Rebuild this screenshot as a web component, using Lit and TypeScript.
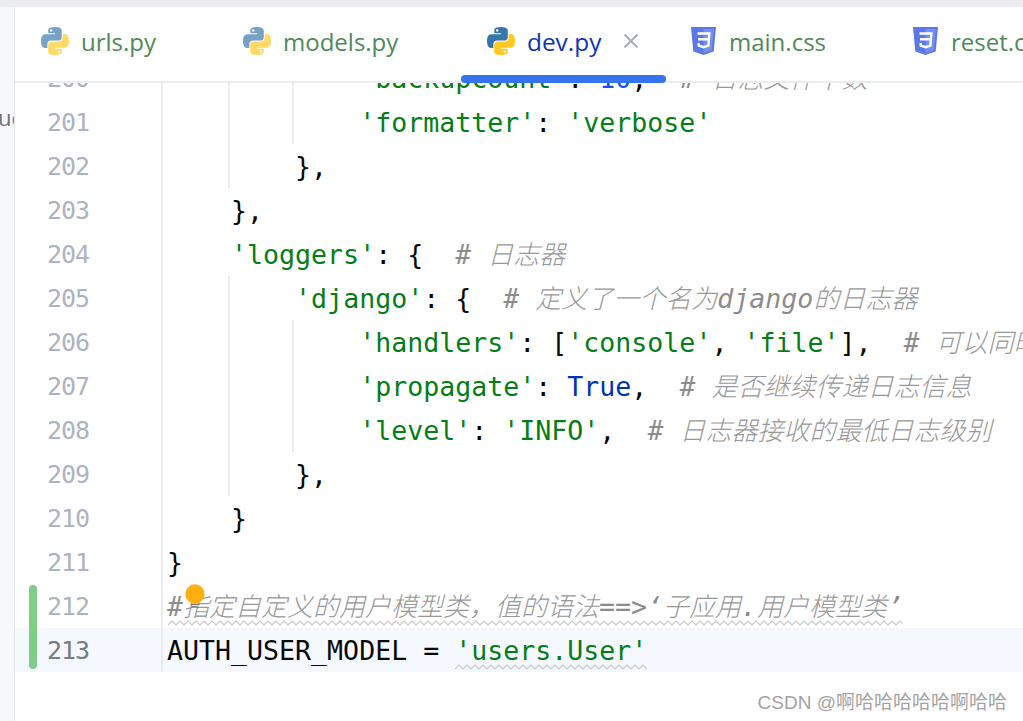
import { LitElement, html, css, svg } from "lit";
import { customElement } from "lit/decorators.js";

type Tok = [string, string];
interface Row { n: number; g?: string; t: Tok[]; cur?: boolean; squig?: [number, number]; bulb?: boolean }

const s = (x: string): Tok => ["str", x];
const p = (x: string): Tok => ["pl", x];
const c = (x: string): Tok => ["com", x];

const rows: Row[] = [
  { n: 200, g: "g1 g2", t: [p("            "), s("'backupcount'"), p(": "), ["num", "10"], p(",  "), c("# 日志文件个数")] },
  { n: 201, g: "g1 g2", t: [p("            "), s("'formatter'"), p(": "), s("'verbose'")] },
  { n: 202, g: "g1", t: [p("        },")] },
  { n: 203, t: [p("    },")] },
  { n: 204, t: [p("    "), s("'loggers'"), p(": {  "), c("# 日志器")] },
  { n: 205, g: "g1", t: [p("        "), s("'django'"), p(": {  "), c("# 定义了一个名为django的日志器")] },
  { n: 206, g: "g1 g2", t: [p("            "), s("'handlers'"), p(": ["), s("'console'"), p(", "), s("'file'"), p("],  "), c("# 可以同时向终端与文件输出")] },
  { n: 207, g: "g1 g2", t: [p("            "), s("'propagate'"), p(": "), ["kw", "True"], p(",  "), c("# 是否继续传递日志信息")] },
  { n: 208, g: "g1 g2", t: [p("            "), s("'level'"), p(": "), s("'INFO'"), p(",  "), c("# 日志器接收的最低日志级别")] },
  { n: 209, g: "g1", t: [p("        },")] },
  { n: 210, t: [p("    }")] },
  { n: 211, t: [p("}")] },
  { n: 212, t: [c("#指定自定义的用户模型类，值的语法==>‘子应用.用户模型类’")], squig: [5, 735], bulb: true },
  { n: 213, cur: true, t: [p("AUTH_USER_MODEL = "), s("'users.User'")], squig: [292, 192] },
];

const tabs = [
  { name: "urls.py", kind: "py", w: "w1" },
  { name: "models.py", kind: "py", w: "w2" },
  { name: "dev.py", kind: "py", w: "w3", active: true },
  { name: "main.css", kind: "css", w: "w4" },
  { name: "reset.css", kind: "css", w: "w5" },
];

const SNAKE = "M54.9 0C26.8 0 28.6 12.2 28.6 12.2l0 12.6h26.8v3.8H17.9S0 26.5 0 54.8s15.6 27.3 15.6 27.3h9.3V69s-.5-15.6 15.4-15.6h26.5s14.9.2 14.9-14.4V14.9S84 0 54.9 0zM40.1 8.5a4.8 4.8 0 1 1 0 9.6 4.8 4.8 0 0 1 0-9.6z";

@customElement("app-root")
export class AppRoot extends LitElement {
  static styles = css`
    :host { display: block; width: 1023px; height: 721px; overflow: hidden; background: #fff; position: relative; }
    .top { height: 7px; background: #ececee; }
    .main { display: flex; height: 714px; }
    .strip { width: 14px; flex: none; background: #f7f8fa; border-right: 1px solid #e6e7ec; overflow: hidden; padding-top: 99px; }
    .strip span { display: block; font: 22px "Open Sans", sans-serif; color: #6c707e; line-height: 22px; white-space: nowrap; margin-left: -2px; }
    .pane { flex: 1; min-width: 0; display: flex; flex-direction: column; position: relative; overflow: hidden; }
    .tabs { height: 74px; flex: none; display: flex; background: #fff; border-bottom: 2px solid #ebecf0; position: relative; z-index: 2; white-space: nowrap; }
    .tab { flex: none; display: flex; align-items: center; padding: 0 0 6px 26px; box-sizing: border-box; position: relative; color: #4f8a58; font: 24px "Open Sans", sans-serif; }
    .w1 { width: 202px; } .w2 { width: 244px; } .w3 { width: 205px; } .w4 { width: 222px; } .w5 { width: 160px; }
    .tab.active { color: #0a36b5; font-size: 24.4px; }
    .icon-py { width: 28px; height: 28px; margin-right: 12px; flex: none; opacity: .68; }
    .active .icon-py { opacity: 1; }
    .icon-css { width: 25px; height: 28px; margin: 0 13px 0 -1px; flex: none; }
    .x { width: 16px; height: 16px; margin-left: 22px; flex: none; margin-bottom: 0; }
    .ind { position: absolute; left: 0; right: 0; bottom: -2px; height: 8px; border-radius: 4px; background: #3574f0; }
    .editor { flex: 1; margin-top: -27px; min-height: 0; position: relative; z-index: 1; }
    .row { display: flex; height: 44px; }
    .row.cur { background: #f5f8fe; }
    .num { width: 148px; flex: none; box-sizing: border-box; padding-left: 32px; border-right: 2px solid #ebecf0; font: 25px/46px "DejaVu Sans Mono", monospace; letter-spacing: -1px; color: #aeb3c2; }
    .cur .num { color: #767a8a; }
    .code { flex: 1; min-width: 0; height: 44px; padding-left: 4px; position: relative; white-space: pre; font: 26.6px/46px "DejaVu Sans Mono", monospace; color: #080808; background-repeat: no-repeat; }
    .code.g1 { background-image: linear-gradient(#ebecf0, #ebecf0); background-size: 2px 100%; background-position: 65px 0; }
    .code.g1.g2 { background-image: linear-gradient(#ebecf0, #ebecf0), linear-gradient(#ebecf0, #ebecf0); background-size: 2px 100%, 2px 100%; background-position: 65px 0, 129px 0; }
    .str { color: #067d17; }
    .kw { color: #0033b3; }
    .numlit { color: #1750eb; }
    .com { color: #8c8c8c; font-style: italic; }
    .cjk { font-family: "Noto Sans CJK SC", sans-serif; font-size: 26px; line-height: 0; font-weight: 300; color: #999; }
    .squig { position: absolute; bottom: 2px; height: 6px; pointer-events: none; }
    .bulb { position: absolute; left: 22px; top: 0; width: 20px; height: 24px; }
    .change { position: absolute; left: 14px; top: 578px; width: 8px; height: 84px; border-radius: 4px; background: #82cc8a; z-index: 3; }
    .mark { position: absolute; right: 16px; bottom: 7px; font: 19px/22px "Liberation Sans", "Noto Sans CJK SC", sans-serif; color: #a3a3a3; white-space: nowrap; z-index: 4; }
  `;

  pyIcon() {
    return html`<svg class="icon-py" viewBox="0 0 110 110">
      <path fill="#3776ab" fill-rule="evenodd" d=${SNAKE}></path>
      <path fill="#ffc91f" fill-rule="evenodd" d=${SNAKE} transform="rotate(180 55 55)"></path>
    </svg>`;
  }

  cssIcon() {
    return html`<svg class="icon-css" viewBox="0 0 25 28">
      <path fill="#5b78e6" d="M0 0H25L22.7 24.6 12.5 28 2.3 24.6Z"></path>
      <path fill="#7690ee" d="M12.5 2V26L20.8 23.3 22.8 2Z"></path>
      <path fill="none" stroke="#fff" stroke-width="2.4" d="M6.5 6.5H18.3L17.4 18.6 12.5 20.2 7.8 18.6 7.5 16M7 12.3H17.8"></path>
    </svg>`;
  }

  comment(text: string) {
    const parts = text.match(/[\u4e00-\u9fff\uff0c]+|[^\u4e00-\u9fff\uff0c]+/g) ?? [];
    return parts.map((t) => (/^[\u4e00-\u9fff\uff0c]/.test(t) ? html`<span class="cjk">${t}</span>` : t));
  }

  squiggle(left: number, width: number) {
    const pts: string[] = [];
    for (let x = 0, i = 0; x <= width + 4; x += 4, i++) pts.push(`${x},${i % 2 ? 1 : 5}`);
    return html`<svg class="squig" style="left:${left}px;width:${width}px" viewBox="0 0 ${width} 6">
      ${svg`<polyline points=${pts.join(" ")} fill="none" stroke="#c9c9c9" stroke-width="1.2"></polyline>`}
    </svg>`;
  }

  render() {
    return html`
      <div class="top"></div>
      <div class="main">
        <div class="strip"><span>uc</span></div>
        <div class="pane">
          <div class="tabs">
            ${tabs.map(
              (t) => html`<div class="tab ${t.w} ${t.active ? "active" : ""}">
                ${t.kind === "py" ? this.pyIcon() : this.cssIcon()}
                <span>${t.name}</span>
                ${t.active
                  ? html`<svg class="x" viewBox="0 0 16 16"><path d="M1.5 1.5 14.5 14.5M14.5 1.5 1.5 14.5" stroke="#a8adbd" stroke-width="2" fill="none"></path></svg>
                      <div class="ind"></div>`
                  : ""}
              </div>`
            )}
          </div>
          <div class="editor">
            ${rows.map(
              (r) => html`<div class="row ${r.cur ? "cur" : ""}">
                <div class="num">${r.n}</div>
                <div class="code ${r.g ?? ""}">${r.t.map(([k, v]) =>
                  k === "com"
                    ? html`<span class="com">${this.comment(v)}</span>`
                    : k === "str"
                    ? html`<span class="str">${v}</span>`
                    : k === "kw"
                    ? html`<span class="kw">${v}</span>`
                    : k === "num"
                    ? html`<span class="numlit">${v}</span>`
                    : v
                )}${r.squig ? this.squiggle(r.squig[0], r.squig[1]) : ""}${r.bulb
                  ? html`<svg class="bulb" viewBox="0 0 20 24">
                      <circle cx="10" cy="10" r="9.7" fill="#ffaf0f"></circle>
                      <rect x="5.5" y="15" width="9" height="4" fill="#ffaf0f"></rect>
                      <path d="M5.5 20.5h9M6.5 23h7" stroke="#7d7d7d" stroke-width="1.4" fill="none"></path>
                    </svg>`
                  : ""}</div>
              </div>`
            )}
          </div>
          <div class="change"></div>
        </div>
      </div>
      <div class="mark">CSDN @啊哈哈哈哈哈啊哈哈</div>
    `;
  }
}
